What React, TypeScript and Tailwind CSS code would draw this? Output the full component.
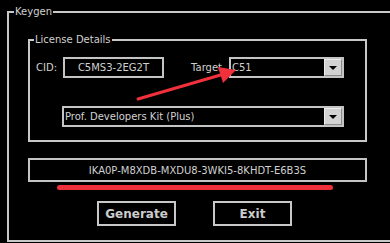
function Combo({ value, className }: { value: string; className: string }) {
  return (
    <div className={`flex items-stretch border-2 border-[#c4c4c4] bg-black ${className}`}>
      <span className="flex-1 pl-[1px] leading-[17px] text-[#d2d2d2]">{value}</span>
      <span className="flex w-[18px] items-center justify-center border border-[#eeeeee] border-r-[#8a8a8a] border-b-[#8a8a8a] bg-[#d2d2d2]">
        <span className="h-0 w-0 border-x-[4px] border-t-[4px] border-x-transparent border-t-black" />
      </span>
    </div>
  );
}

function App() {
  return (
    <div
      className="relative h-[243px] w-[390px] overflow-hidden bg-black text-[10px] text-[#d0d0d0]"
      style={{ fontFamily: '"DejaVu Sans", Verdana, sans-serif' }}
    >
      <fieldset className="ml-[7px] mt-[6px] h-[236px] w-[420px] border-2 border-[#c8c8c8]">
        <legend className="ml-[5px] px-[1px] leading-[12px]">Keygen</legend>

        <fieldset className="ml-[19px] mt-[16px] h-[108px] w-[339px] border-2 border-[#c8c8c8]">
          <legend className="ml-[4px] px-[1px] leading-[12px]">License Details</legend>

          <div className="mt-[11px] flex items-center">
            <span className="ml-[6px] w-[27px]">CID:</span>
            <div className="flex h-[21px] w-[101px] items-center justify-center border-2 border-[#c4c4c4]">
              C5MS3-2EG2T
            </div>
            <span className="w-[65px] pr-[7px] text-right">Target</span>
            <Combo value="C51" className="h-[21px] w-[115px]" />
          </div>

          <Combo value="Prof. Developers Kit (Plus)" className="ml-[32px] mt-[28px] h-[21px] w-[282px]" />
        </fieldset>

        <div className="ml-[19px] mt-[16px] flex h-[24px] w-[339px] items-center justify-center border-2 border-[#c4c4c4]">
          IKA0P-M8XDB-MXDU8-3WKI5-8KHDT-E6B3S
        </div>

        <div className="ml-[48px] mt-[3px] h-[5px] w-[276px] rounded-full bg-[#f0303a]" />

        <div className="ml-[88px] mt-[11px] flex gap-[37px] text-[12px] font-bold text-[#cccccc]">
          <button className="h-[25px] w-[79px] border-2 border-[#c8c8c8] bg-black">Generate</button>
          <button className="h-[25px] w-[79px] border-2 border-[#c8c8c8] bg-black">Exit</button>
        </div>
      </fieldset>

      <svg className="pointer-events-none absolute left-0 top-0" width="390" height="243">
        <line x1="138" y1="99" x2="224" y2="74" stroke="#f0303a" strokeWidth="3" strokeLinecap="round" />
        <polygon points="236,70 218,67 223,83" fill="#f0303a" />
      </svg>
    </div>
  );
}

export default App;
